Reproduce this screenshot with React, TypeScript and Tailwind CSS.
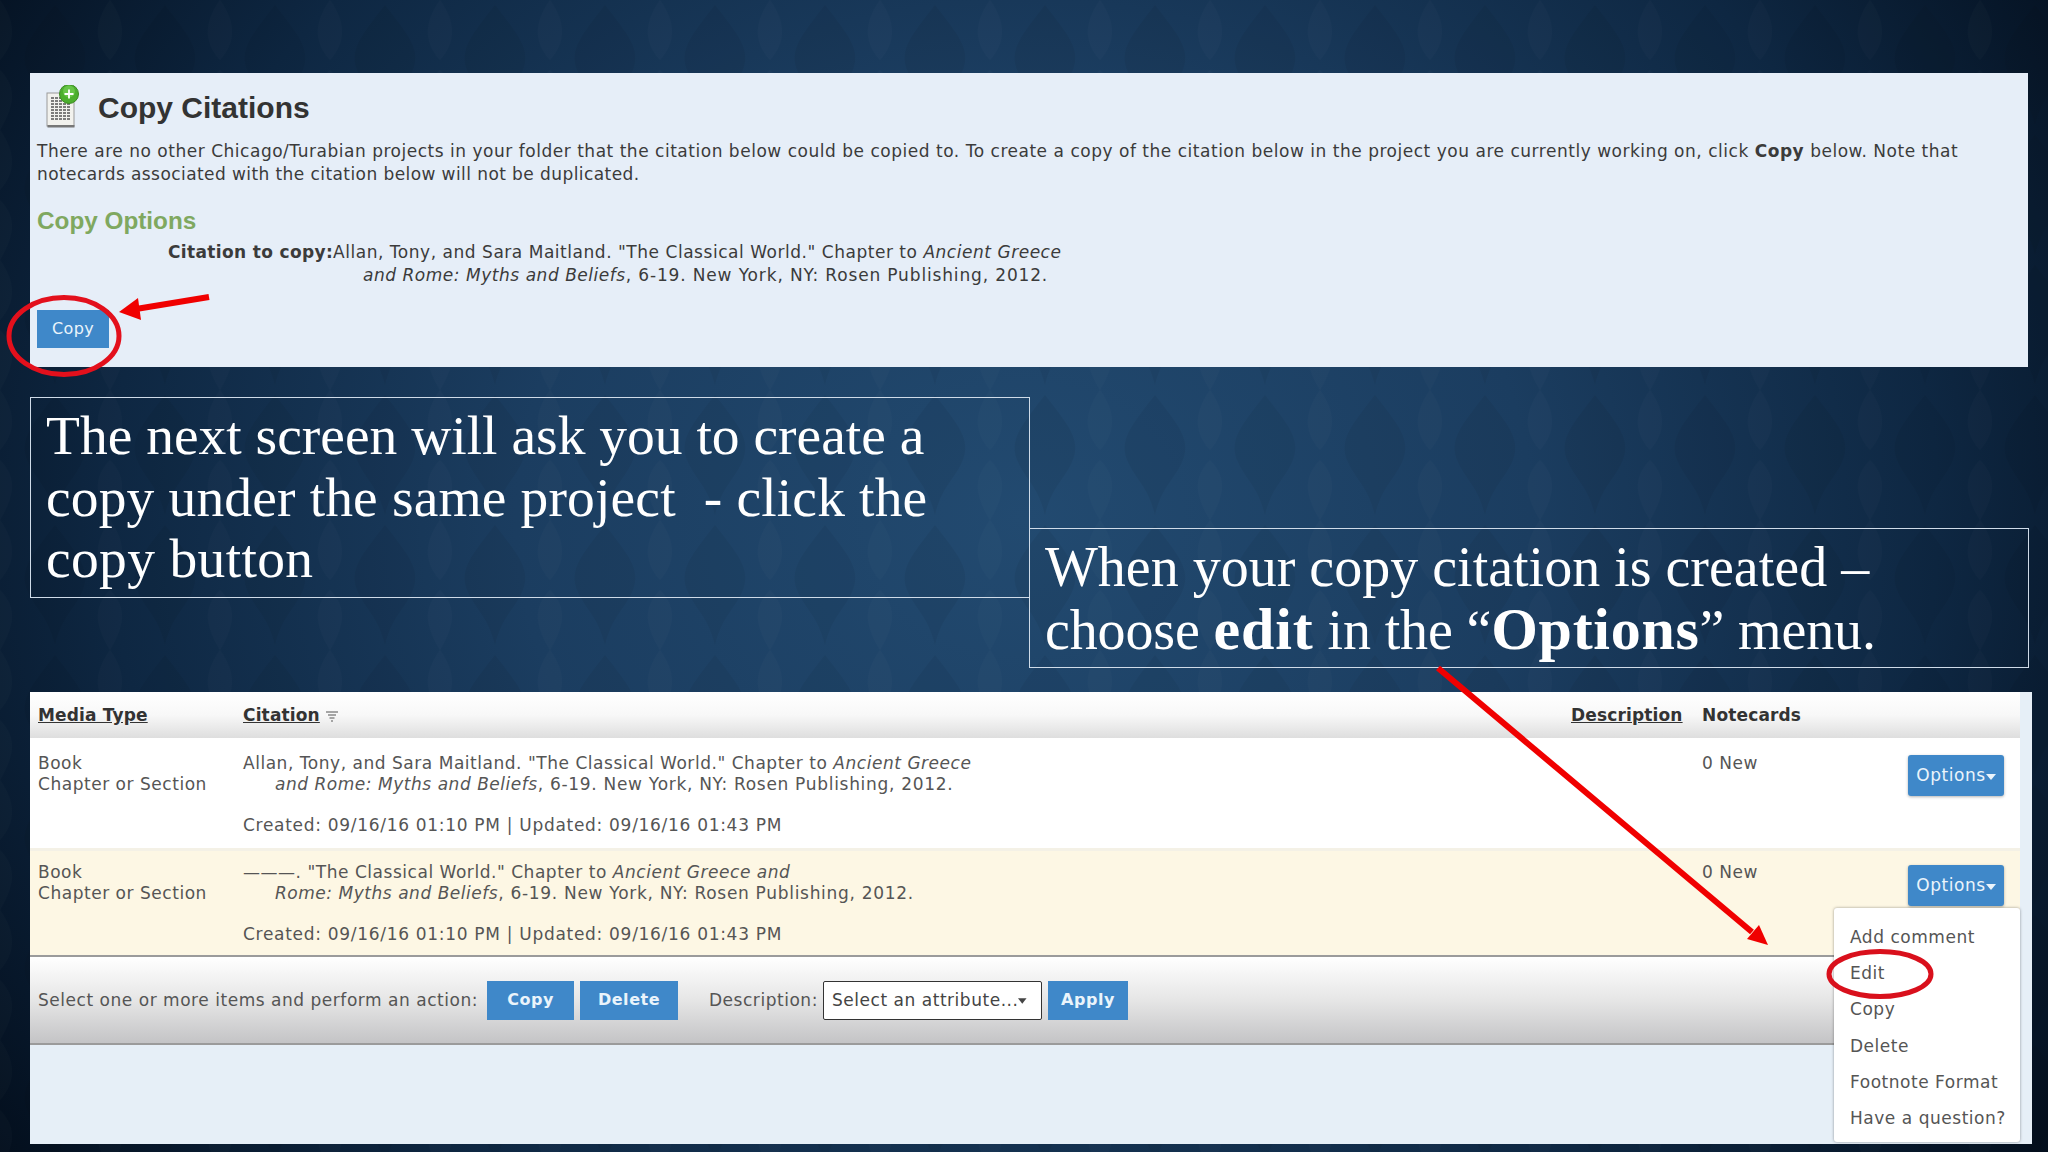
import React from "react";

const sans = "font-['DejaVu_Sans',sans-serif]";
const serif = "font-['Liberation_Serif',serif]";

function BlueBtn({ children, className }: { children: React.ReactNode; className: string }) {
  return (
    <button className={`flex items-center justify-center bg-[#3f88c9] text-[#eaf4fb] ${className}`}>
      {children}
    </button>
  );
}

function OptionsBtn() {
  return (
    <BlueBtn className="h-[41px] w-[96px] rounded-[3px] text-[17px] shadow-[0_1px_3px_rgba(0,0,0,0.3)]">
      Options
      <svg width="10" height="6" viewBox="0 0 10 6" className="mt-[2px]">
        <path d="M0 0h10L5 6z" fill="#eaf4fb" />
      </svg>
    </BlueBtn>
  );
}

function DocIcon() {
  return (
    <svg width="36" height="44" viewBox="0 0 36 44" className="shrink-0">
      <rect x="2" y="8" width="27" height="33" fill="#f2f2ee" stroke="#9a9a9a" />
      <rect x="2.500" y="40" width="27" height="2.500" fill="#777" />
      {[13, 16, 19, 22, 25, 28, 31, 34].map((y) => (
        <path key={y} d={`M6 ${y}h19`} stroke="#555" strokeWidth="1.300" strokeDasharray="3 1" />
      ))}
      <circle cx="24" cy="9" r="9.500" fill="#4caf2e" stroke="#3c8a24" />
      <circle cx="24" cy="6.500" r="6" fill="#79d45a" opacity="0.6" />
      <path d="M24 4.500v9M19.500 9h9" stroke="#fff" strokeWidth="1.800" />
    </svg>
  );
}

function Row({ dash, bg, pad, btn }: { dash: boolean; bg: string; pad: string; btn: string }) {
  return (
    <div className={`grid grid-cols-[205px_1459px_1fr] ${bg} pl-[8px] text-[17px] leading-[21px] tracking-[0.53px] text-[#555]`}>
      <div className={pad}>
        <div>Book</div>
        <div>Chapter or Section</div>
      </div>
      <div className={pad}>
        {dash ? (
          <>
            <div>
              ———. "The Classical World." Chapter to <i>Ancient Greece and</i>
            </div>
            <div className="pl-[32px]">
              <i>Rome: Myths and Beliefs</i><span className="tracking-[0.7px]">, 6-19. New York, NY: Rosen Publishing, 2012.</span>
            </div>
          </>
        ) : (
          <>
            <div>
              Allan, Tony, and Sara Maitland. "The Classical World." Chapter to <i>Ancient Greece</i>
            </div>
            <div className="pl-[32px]">
              <i>and Rome: Myths and Beliefs</i><span className="tracking-[0.7px]">, 6-19. New York, NY: Rosen Publishing, 2012.</span>
            </div>
          </>
        )}
        <div className="mt-[20px] tracking-[0.7px]">Created: 09/16/16 01:10 PM | Updated: 09/16/16 01:43 PM</div>
      </div>
      <div className={`flex items-start justify-between pr-[16px] ${pad}`}>
        <span>0 New</span>
        <span className={btn}>
          <OptionsBtn />
        </span>
      </div>
    </div>
  );
}

export default function App() {
  return (
    <div className={`relative h-[1152px] w-[2048px] overflow-hidden pl-[30px] pt-[73px] ${sans} bg-[radial-gradient(ellipse_62%_95%_at_50%_45%,#224a70_0%,#1b3d60_40%,#0e2742_72%,#030e1c_100%)]`}>
      <svg className="pointer-events-none absolute inset-0" width="2048" height="1152">
        <defs>
          <pattern id="damask" width="110" height="130" patternUnits="userSpaceOnUse">
            <path d="M55 5C78 35 92 50 82 72C74 90 62 96 55 125C48 96 36 90 28 72C18 50 32 35 55 5Z" fill="#000" opacity="0.05" />
            <path d="M0 70C14 85 18 100 0 130M110 70C96 85 92 100 110 130M0 0C14 20 18 40 0 60M110 0C96 20 92 40 110 60" fill="#fff" opacity="0.015" />
          </pattern>
        </defs>
        <rect width="2048" height="1152" fill="url(#damask)" />
      </svg>

      {/* Copy citations panel */}
      <section className="relative z-10 h-[294px] w-[1998px] bg-[#e6eef8] px-[7px] text-[#3b3b3b]">
        <div className="flex h-[63px] items-center pl-[8px] pt-[5px]">
          <DocIcon />
          <h1 className="ml-[17px] font-['Liberation_Sans',sans-serif] text-[30px] font-bold text-[#333]">Copy Citations</h1>
        </div>
        <p className="mt-[4px] text-[17px] leading-[22.500px] tracking-[0.52px]">
          There are no other Chicago/Turabian projects in your folder that the citation below could be copied to. To create a copy of the citation below in the project you are currently working on, click <b>Copy</b> below. Note that<br />
          <span className="tracking-[0.42px]">notecards associated with the citation below will not be duplicated.</span>
        </p>
        <h2 className="mt-[22px] font-['Liberation_Sans',sans-serif] text-[24.300px] font-bold leading-[28px] text-[#7fa860]">Copy Options</h2>
        <div className="mt-[6px] pl-[131px] text-[17px] leading-[22.500px] tracking-[0.53px]">
          <div>
            <b className="tracking-[0.35px]">Citation to copy:</b>Allan, Tony, and Sara Maitland. "The Classical World." Chapter to <i>Ancient Greece</i>
          </div>
          <div className="pl-[195px]">
            <i>and Rome: Myths and Beliefs</i><span className="tracking-[0.85px]">, 6-19. New York, NY: Rosen Publishing, 2012.</span>
          </div>
        </div>
        <BlueBtn className="mt-[24px] h-[38px] w-[72px] text-[16px] tracking-[0.4px]">Copy</BlueBtn>
      </section>

      {/* Slide captions */}
      <div className={`relative z-10 mt-[30px] flex items-start text-white ${serif}`}>
        <div className="h-[201px] w-[1000px] shrink-0 border-[1.500px] border-[#cfdbe8] pl-[15px] pt-[7px] text-[55.500px] leading-[61.500px]">
          The next screen will ask you to create a<br />
          <span className="tracking-[0.15px]">copy under the same project&nbsp; - click the</span><br />
          <span className="tracking-[0.35px]">copy button</span>
        </div>
        <div className="ml-[-1px] mt-[131px] h-[140px] w-[1000px] shrink-0 border-[1.500px] border-[#cfdbe8] pl-[15px] pt-[8px] text-[56px] leading-[61.500px]">
          When your copy citation is created –<br />
          <span className="tracking-[-0.15px]">
            choose <b className="text-[60px] leading-none tracking-[0.9px]">edit</b> in the “<b className="text-[60px] leading-none tracking-[0.7px]">Options</b>” menu.
          </span>
        </div>
      </div>

      {/* Citations table */}
      <section className="relative z-10 mt-[24px] h-[452px] w-[2002px] bg-[#e6eff7] text-[#555]">
        <div className="w-[1990px]">
          <div className="grid h-[46px] grid-cols-[205px_1328px_131px_1fr] items-center bg-gradient-to-b from-white via-[#f8f8f8] to-[#dedede] pl-[8px] pt-[2px] text-[17px] font-bold tracking-[0.15px] text-[#333]">
            <span className="underline">Media Type</span>
            <span className="flex items-center gap-[6px]">
              <span className="underline">Citation</span>
              <svg width="12" height="11" viewBox="0 0 12 11">
                <path d="M0 1h12M2 4h8M3.500 7h5M5 10h2" stroke="#8a8a8a" strokeWidth="1.500" />
              </svg>
            </span>
            <span className="underline">Description</span>
            <span>Notecards</span>
          </div>
          <Row dash={false} bg="h-[110px] bg-white" pad="pt-[15px]" btn="mt-[2px]" />
          <Row dash={true} bg="h-[107px] border-t-[3px] border-[#f4f1e6] bg-[#fdf7e4]" pad="pt-[11px]" btn="mt-[3px]" />
          <div className="flex h-[90px] items-center border-y-[2px] border-y-[#9b9b9b] bg-gradient-to-b from-white via-[#e6e6e6] to-[#c4c4c6] pl-[8px] text-[17px] tracking-[0.53px]">
            <span className="w-[449px] shrink-0 whitespace-nowrap pt-[2px] text-[#555]">Select one or more items and perform an action:</span>
            <BlueBtn className="h-[39px] w-[87px] text-[16px] font-bold">Copy</BlueBtn>
            <BlueBtn className="ml-[6px] h-[39px] w-[98px] text-[16px] font-bold">Delete</BlueBtn>
            <span className="ml-[31px] w-[114px] shrink-0 whitespace-nowrap pt-[2px]">Description:</span>
            <div className="flex h-[39px] w-[219px] items-center justify-between whitespace-nowrap rounded-[2px] border-[1.500px] border-[#333] bg-white pl-[8px] pr-[14px] pt-[1px] text-[#444]">
              Select an attribute...
              <svg width="9" height="6" viewBox="0 0 9 6"><path d="M0 0h9L4.500 6z" fill="#444" /></svg>
            </div>
            <BlueBtn className="ml-[6px] h-[39px] w-[80px] text-[16px] font-bold">Apply</BlueBtn>
          </div>
        </div>
      </section>

      {/* Dropdown menu */}
      <div className="absolute left-[1834px] top-[908px] z-10 flex h-[234px] w-[186px] flex-col justify-between rounded-[3px] bg-white pb-[11px] pl-[16px] pt-[17px] text-[17px] leading-[25px] tracking-[0.53px] whitespace-nowrap text-[#555] shadow-[0_0_3px_rgba(0,0,0,0.4)]">
        <span>Add comment</span>
        <span>Edit</span>
        <span>Copy</span>
        <span>Delete</span>
        <span>Footnote Format</span>
        <span>Have a question?</span>
      </div>

      {/* Red annotations */}
      <svg className="pointer-events-none absolute inset-0 z-20" width="2048" height="1152">
        <ellipse cx="64" cy="336" rx="55" ry="38.500" fill="none" stroke="#e3101c" strokeWidth="5" />
        <path d="M209 297L136 309" stroke="#f00000" strokeWidth="6" fill="none" />
        <path d="M119 312L138 298L141 320Z" fill="#f00000" />
        <path d="M1438 668L1752 932" stroke="#f00000" strokeWidth="6" fill="none" />
        <path d="M1768 945L1747 939L1759 925Z" fill="#f00000" />
        <ellipse cx="1880" cy="974" rx="51" ry="22.500" fill="none" stroke="#d9101c" strokeWidth="5" />
      </svg>
    </div>
  );
}
